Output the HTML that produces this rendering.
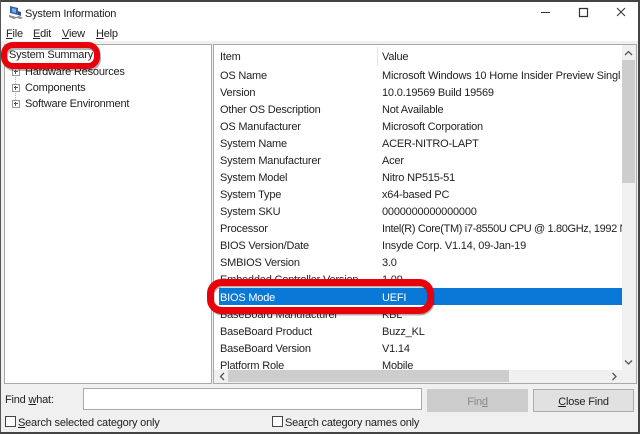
<!DOCTYPE html>
<html><head><meta charset="utf-8"><style>
html,body{margin:0;padding:0;background:#fff}
#w{position:relative;width:640px;height:434px;overflow:hidden;background:#f0f0f0;font-family:"Liberation Sans",sans-serif;font-size:11px;color:#222;letter-spacing:-.2px}
#w div{position:absolute;box-sizing:border-box}
.t{white-space:nowrap;line-height:14px;height:14px}
u{text-underline-offset:1px}
.b{background:#fff;border:1px solid #a9a9a9}
.p{width:8px;height:8px;border:1px solid #999;background:#fff}
.h{width:4px;height:1px;background:#555}
.v{width:1px;height:4px;background:#555}
</style></head><body><div id="w">
<div style="left:0;top:0;width:640px;height:41px;background:#fff"></div>
<div style="left:0;top:0;width:640px;height:2px;background:#444"></div>
<div style="left:0;top:0;width:1px;height:434px;background:#555"></div>
<div style="left:638px;top:0;width:2px;height:434px;background:#444"></div>
<div style="left:0;top:432px;width:640px;height:2px;background:#444"></div>
<svg style="position:absolute;left:8px;top:5px" width="16" height="16" viewBox="0 0 16 16"><path d="M2 1l8 2v7l-8-2z" fill="#2f5fb0"/><path d="M4 3l4 1v4l-4-1z" fill="#7fa8e0"/><path d="M1 10l7 2 3-1 4 2-3 1-3-1-3 1-5-2z" fill="#8a8a9a"/><path d="M10 6l3 1v4l-3-1z" fill="#3a4a90"/></svg>
<div class="t" style="left:25px;top:7px">System Information</div>
<svg style="position:absolute;left:530px;top:4px" width="100" height="18" viewBox="0 0 100 18"><path d="M11 8.500h9" stroke="#333" stroke-width="1"/><path d="M49.500 4.500h8v8h-8z" fill="none" stroke="#333" stroke-width="1.200"/><path d="M87 4l8 8M95 4l-8 8" stroke="#333" stroke-width="1"/></svg>
<div class="t" style="left:6px;top:27px"><u>F</u>ile</div>
<div class="t" style="left:33px;top:27px"><u>E</u>dit</div>
<div class="t" style="left:62px;top:27px"><u>V</u>iew</div>
<div class="t" style="left:96px;top:27px"><u>H</u>elp</div>

<div class="b" style="left:4px;top:44px;width:208px;height:340px"></div>
<div class="t" style="left:9px;top:48px">System Summary</div>
<div style="left:15px;top:64px;width:1px;height:40px;border-left:1px dotted #aaa"></div>
<div class="p" style="left:12px;top:68px"></div><div class="h" style="left:14px;top:71px"></div><div class="v" style="left:15px;top:70px"></div>
<div class="p" style="left:12px;top:84px"></div><div class="h" style="left:14px;top:87px"></div><div class="v" style="left:15px;top:86px"></div>
<div class="p" style="left:12px;top:100px"></div><div class="h" style="left:14px;top:103px"></div><div class="v" style="left:15px;top:102px"></div>
<div class="t" style="left:25px;top:65px">Hardware Resources</div>
<div class="t" style="left:25px;top:81px">Components</div>
<div class="t" style="left:25px;top:97px">Software Environment</div>

<div class="b" style="left:213px;top:44px;width:424px;height:340px"></div>
<div style="left:377px;top:47px;width:1px;height:19px;background:#e5e5e5"></div>
<div class="t" style="left:220px;top:50px">Item</div><div class="t" style="left:382px;top:50px">Value</div>
<div class="t" style="left:220px;top:69px">OS Name</div><div class="t" style="left:382px;top:69px;letter-spacing:-.16px">Microsoft Windows 10 Home Insider Preview Singl</div>
<div class="t" style="left:220px;top:86px">Version</div><div class="t" style="left:382px;top:86px">10.0.19569 Build 19569</div>
<div class="t" style="left:220px;top:103px">Other OS Description</div><div class="t" style="left:382px;top:103px">Not Available</div>
<div class="t" style="left:220px;top:120px">OS Manufacturer</div><div class="t" style="left:382px;top:120px">Microsoft Corporation</div>
<div class="t" style="left:220px;top:137px">System Name</div><div class="t" style="left:382px;top:137px">ACER-NITRO-LAPT</div>
<div class="t" style="left:220px;top:154px">System Manufacturer</div><div class="t" style="left:382px;top:154px">Acer</div>
<div class="t" style="left:220px;top:171px">System Model</div><div class="t" style="left:382px;top:171px">Nitro NP515-51</div>
<div class="t" style="left:220px;top:188px">System Type</div><div class="t" style="left:382px;top:188px">x64-based PC</div>
<div class="t" style="left:220px;top:205px">System SKU</div><div class="t" style="left:382px;top:205px">0000000000000000</div>
<div class="t" style="left:220px;top:222px">Processor</div><div class="t" style="left:382px;top:222px;width:240px;overflow:hidden;letter-spacing:-.36px">Intel(R) Core(TM) i7-8550U CPU @ 1.80GHz, 1992 N</div>
<div class="t" style="left:220px;top:239px">BIOS Version/Date</div><div class="t" style="left:382px;top:239px">Insyde Corp. V1.14, 09-Jan-19</div>
<div class="t" style="left:220px;top:256px">SMBIOS Version</div><div class="t" style="left:382px;top:256px">3.0</div>
<div class="t" style="left:220px;top:273px">Embedded Controller Version</div><div class="t" style="left:382px;top:273px">1.09</div>
<div style="left:219px;top:288px;width:403px;height:17px;background:#0a78d7"></div>
<div class="t" style="left:220px;top:291px;color:#fff">BIOS Mode</div><div class="t" style="left:382px;top:291px;color:#fff">UEFI</div>
<div class="t" style="left:220px;top:308px">BaseBoard Manufacturer</div><div class="t" style="left:382px;top:308px">KBL</div>
<div class="t" style="left:220px;top:325px">BaseBoard Product</div><div class="t" style="left:382px;top:325px">Buzz_KL</div>
<div class="t" style="left:220px;top:342px">BaseBoard Version</div><div class="t" style="left:382px;top:342px">V1.14</div>
<div class="t" style="left:220px;top:359px">Platform Role</div><div class="t" style="left:382px;top:359px">Mobile</div>

<div style="left:622px;top:45px;width:14px;height:325px;background:#f0f0f0"></div>
<div style="left:622px;top:60px;width:13px;height:123px;background:#cdcdcd"></div>
<div style="left:214px;top:370px;width:422px;height:13px;background:#f0f0f0"></div>
<div style="left:228px;top:370px;width:281px;height:12px;background:#cdcdcd"></div>
<svg style="position:absolute;left:0;top:0" width="640" height="434" viewBox="0 0 640 434" fill="none" stroke="#555" stroke-width="1.300"><path d="M625 55l3.500-3.500 3.500 3.500M625 360.500l3.500 3.500 3.500-3.500M224 373l-3.500 3.500 3.500 3.500M612.500 373l3.500 3.500-3.500 3.500"/></svg>

<div class="t" style="left:5px;top:393px">Find <u>w</u>hat:</div>
<div class="b" style="left:83px;top:388px;width:339px;height:22px"></div>
<div style="left:427px;top:389px;width:101px;height:23px;background:#ccc"></div>
<div class="t" style="left:427px;top:395px;width:101px;text-align:center;color:#8a8a8a">Fin<u>d</u></div>
<div style="left:533px;top:389px;width:101px;height:23px;background:#e1e1e1;border:1px solid #adadad"></div>
<div class="t" style="left:533px;top:395px;width:101px;text-align:center"><u>C</u>lose Find</div>
<div style="left:5px;top:416px;width:11px;height:11px;background:#fff;border:1px solid #444"></div>
<div class="t" style="left:18px;top:416px"><u>S</u>earch selected category only</div>
<div style="left:272px;top:416px;width:11px;height:11px;background:#fff;border:1px solid #444"></div>
<div class="t" style="left:285px;top:416px">Sea<u>r</u>ch category names only</div>

<svg style="position:absolute;left:0;top:0" width="640" height="434" viewBox="0 0 640 434" fill="none">
<g stroke="#000" stroke-opacity=".3" stroke-width="6" transform="translate(1 2)"><rect x="4" y="45" width="93" height="21" rx="9"/><rect x="210.500" y="282.500" width="220" height="28" rx="11"/></g>
<rect x="4" y="45" width="93" height="21" rx="9" stroke="#e8000b" stroke-width="6"/>
<rect x="210.500" y="282.500" width="220" height="28" rx="11" stroke="#e8000b" stroke-width="7"/>
</svg>
</div></body></html>
